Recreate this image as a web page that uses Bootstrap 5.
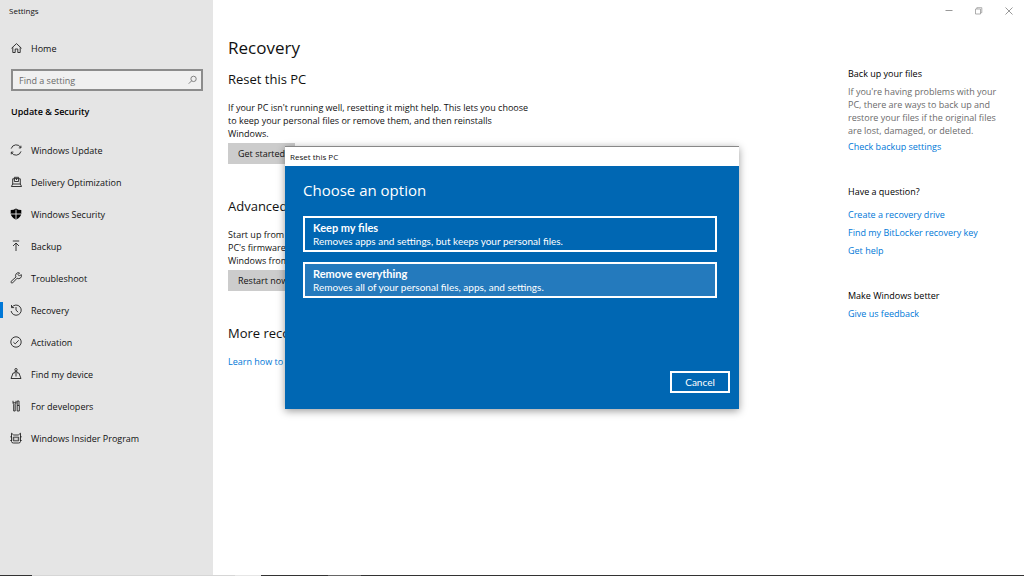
<!DOCTYPE html>
<html lang="en">
<head>
<meta charset="utf-8">
<meta name="viewport" content="width=device-width, initial-scale=1">
<title>Settings</title>
<link href="https://cdn.jsdelivr.net/npm/bootstrap@5.3.0/dist/css/bootstrap.min.css" rel="stylesheet">
<style>
  body { font: 9px/13px "Open Sans", "Noto Sans", sans-serif; color: #111; background: #fff; }
  a { color: #0078d7; text-decoration: none; }
  a:hover { text-decoration: underline; }
  svg { fill: none; stroke: #222; }

  .sidebar { width: 213px; background: #e5e5e5; }
  .app-title { font-size: 8px; line-height: 22px; padding-left: 9px; }
  .side-link { height: 32px; gap: 9px; padding-left: 10px; color: #111; }
  .side-link svg { width: 12px; height: 12px; flex: none; stroke-width: .9; }
  .active-bar { width: 3px; height: 16px; background: #0078d7; left: 0; top: 8px; }
  .home-link { margin-top: 10px; }
  .search-box { margin: 5px 10px 0 11px; height: 22px; border: 2px solid #8c8c8c; background: #f0f0f0; }
  .search-box input { font-size: 9px; line-height: 13px; padding: 0 6px; color: #111; }
  .search-box input::placeholder { color: #6a6a6a; }
  .search-box svg { width: 10px; height: 10px; stroke: #777; margin-right: 4px; }
  .group-title { font-size: 9px; line-height: 13px; font-weight: 600; color: #000; margin: 14px 0 16px 11px; }

  .window-controls button { width: 30px; height: 22px; }
  .window-controls svg { width: 8px; height: 8px; stroke: #999; }
  .content-col { padding: 14px 15px 0; }
  .content-col .copy { max-width: 302px; margin: 0; }
  h1 { font-size: 17px; line-height: 24px; font-weight: 400; margin: 0 0 11px; }
  h2 { font-size: 13px; line-height: 16px; font-weight: 400; margin: 0 0 14px; }
  .section-block { padding-bottom: 34px; }
  .btn-flat { font-size: 9px; line-height: 13px; padding: 4px 10px; background: #ccc; border-radius: 0; border: 0; color: #111; margin-top: 3px; }
  .help-col { width: 176px; padding: 45px 24px 0 0; }
  .help-col h3 { font-size: 9px; line-height: 13px; font-weight: 400; color: #000; margin: 0; }
  .help-col .muted-copy { color: #6b6b6b; margin: 5px 0 3px; }
  .help-col section { margin-bottom: 32px; }
  .help-links { margin-top: 10px; gap: 5px; }
  .feedback-link { margin-top: 5px; }

  .dialog-layer { inset: 0; padding-bottom: 21px; }
  .dialog-box { width: 454px; background: #0067b3; color: #fff; border-top: 1px solid #888; box-shadow: 0 2px 8px rgba(0,0,0,.4); }
  .dialog-caption { background: #fff; color: #111; font-size: 8px; line-height: 19px; padding: 0 5px; }
  .dialog-content { padding: 14px 9px 16px 18px; min-height: 243px; }
  .dialog-content h2 { font-size: 15px; line-height: 20px; margin: 0 0 16px; }
  .option-list { margin-right: 13px; gap: 10px; }
  .option-btn { border: 2px solid #fff; background: #0067b3; color: #fff; text-align: left; padding: 3px 8px 2px; font: 10px/14px Lato, "Open Sans", sans-serif; }
  .option-btn strong { font-size: 11px; line-height: 13px; }
  .option-btn.hovered, .option-btn:hover { background: #247abd; }
  .cancel-btn { width: 60px; height: 22px; border: 2px solid #fff; background: #0067b3; color: #fff; font: 10px/14px Lato, "Open Sans", sans-serif; }

  .taskbar-edge { height: 1px; background: #333; }
  .taskbar-edge div:nth-child(1) { width: 32px; }
  .taskbar-edge div:nth-child(2) { width: 203px; background: #d6d6d6; }
  .taskbar-edge div:nth-child(3) { width: 26px; background: #e6e6e6; }
  .taskbar-edge div:nth-child(4) { width: 67px; }
  .taskbar-edge div:nth-child(5) { width: 33px; background: #666; }
</style>
</head>
<body class="min-vh-100 d-flex flex-column position-relative">

<div class="d-flex flex-grow-1">
  <nav class="sidebar flex-shrink-0" aria-label="Settings">
    <div class="app-title">Settings</div>
    <a href="#" class="side-link home-link d-flex align-items-center">
      <svg viewBox="0 0 12 12"><path d="M1.500 6.300 6.500 1.600l5 4.700M2.800 5.300v5.200h2.400V7h2.600v3.500h2.400V5.300"/></svg>Home
    </a>
    <div class="search-box d-flex align-items-center">
      <input type="text" class="flex-grow-1 border-0 bg-transparent w-100" placeholder="Find a setting" aria-label="Find a setting">
      <svg viewBox="0 0 10 10"><circle cx="6" cy="3.800" r="2.900"/><path d="M3.900 5.900.8 9"/></svg>
    </div>
    <h2 class="group-title">Update &amp; Security</h2>
    <a href="#" class="side-link d-flex align-items-center">
      <svg viewBox="0 0 12 12"><path d="M1.200 4.600A5.200 5.200 0 0 1 10.800 3.600M11 7.400A5.200 5.200 0 0 1 1.400 8.400M10.900 1.700V3.900H8.800M1.300 10.300V8.100H3.400"/></svg>Windows Update
    </a>
    <a href="#" class="side-link d-flex align-items-center">
      <svg viewBox="0 0 12 12"><path d="M2.700 8V2.800H4.400M8.600 2.800H10.300V8M2.700 8H10.300L11.600 10.500H1.400zM4.400 1.300H8.600V5.500H4.400zM4.400 2.600H8.600M6.500 2.600V4"/></svg>Delivery Optimization
    </a>
    <a href="#" class="side-link d-flex align-items-center">
      <svg viewBox="0 0 12 12"><path d="M6 .5Q8.300 2 11.300 2V5.500Q10.800 9.600 6 11.500Q1.200 9.600 .7 5.500V2Q3.700 2 6 .5z" fill="#000" stroke="none"/><path d="M6 1.500V11M1 6H11" stroke="#e5e5e5"/></svg>Windows Security
    </a>
    <a href="#" class="side-link d-flex align-items-center">
      <svg viewBox="0 0 12 12"><path d="M2.800 1H9.200M6 11V3M3 6 6 3 9 6"/></svg>Backup
    </a>
    <a href="#" class="side-link d-flex align-items-center">
      <svg viewBox="0 0 12 12"><path d="M6 5A2.800 2.800 0 0 1 9.600 1L8 2.600 9.500 4.100 11.100 2.500A2.800 2.800 0 0 1 7.100 6.200L2.600 10.900A1.100 1.100 0 0 1 1.100 9.400z"/></svg>Troubleshoot
    </a>
    <a href="#" class="side-link d-flex align-items-center position-relative" aria-current="page">
      <span class="active-bar position-absolute"></span>
      <svg viewBox="0 0 12 12"><path d="M1.900 3.300A5.100 5.100 0 1 1 1.100 7M1.500 1V3.600H4.100M6 3V6.200L8.200 8.200"/></svg>Recovery
    </a>
    <a href="#" class="side-link d-flex align-items-center">
      <svg viewBox="0 0 12 12"><circle cx="6" cy="6" r="5.200"/><path d="M3.400 6.200 5.200 7.900 8.700 4.300"/></svg>Activation
    </a>
    <a href="#" class="side-link d-flex align-items-center">
      <svg viewBox="0 0 12 12"><circle cx="6" cy="1.700" r="1.200"/><path d="M6 2.900V8.500M4.600 5H3.100L1 10.500H11L8.900 5H7.400M4 4.500 6 3.500 8 4.500"/></svg>Find my device
    </a>
    <a href="#" class="side-link d-flex align-items-center">
      <svg viewBox="0 0 12 12"><path d="M3 .8V3.200L3.700 4.200V11H5.200V4.200L6 3.200V.8M3 2.800H6M7.200 1H9V5.500M7.200 1V5.500M7.200 5.500H9.300V11H7.200z"/></svg>For developers
    </a>
    <a href="#" class="side-link d-flex align-items-center">
      <svg viewBox="0 0 12 12"><path d="M1.500 1.200V9.500Q1.500 11 3.500 11H8.500Q10.500 11 10.500 9.500V1.200L8.300 3H3.700zM.3 4.800H2M10 4.800H11.700M.3 8.500H2M10 8.500H11.700M3.300 5.200H8.700V8.800H3.300zM4.500 7H5.200M6.800 7H7.500"/></svg>Windows Insider Program
    </a>
  </nav>

  <div class="flex-grow-1 d-flex flex-column">
    <div class="window-controls d-flex justify-content-end">
      <button type="button" class="btn p-0 border-0 d-flex align-items-center justify-content-center" aria-label="Minimize"><svg viewBox="0 0 8 8"><path d="M.5 3.500H7.500"/></svg></button>
      <button type="button" class="btn p-0 border-0 d-flex align-items-center justify-content-center" aria-label="Restore"><svg viewBox="0 0 8 8"><path d="M.5 2H5.500V7H.5zM1.800 2V.7H6.800V5.700H5.500" stroke-width=".8"/></svg></button>
      <button type="button" class="btn p-0 border-0 d-flex align-items-center justify-content-center" aria-label="Close"><svg viewBox="0 0 8 8"><path d="M.5.5 7.500 7.500M7.500.5.5 7.500"/></svg></button>
    </div>
    <div class="d-flex flex-grow-1 justify-content-between">
      <main class="content-col">
        <h1>Recovery</h1>
        <section class="section-block">
          <h2>Reset this PC</h2>
          <p class="copy">If your PC isn't running well, resetting it might help. This lets you choose to keep your personal files or remove them, and then reinstalls Windows.</p>
          <button type="button" class="btn btn-flat">Get started</button>
        </section>
        <section class="section-block">
          <h2>Advanced startup</h2>
          <p class="copy">Start up from<br>PC's firmware<br>Windows from</p>
          <button type="button" class="btn btn-flat">Restart now</button>
        </section>
        <section>
          <h2>More recovery options</h2>
          <a href="#">Learn how to start fresh</a>
        </section>
      </main>
      <aside class="help-col flex-shrink-0">
        <section>
          <h3>Back up your files</h3>
          <p class="muted-copy">If you're having problems with your PC, there are ways to back up and restore your files if the original files are lost, damaged, or deleted.</p>
          <a href="#">Check backup settings</a>
        </section>
        <section>
          <h3>Have a question?</h3>
          <div class="help-links d-flex flex-column align-items-start">
            <a href="#">Create a recovery drive</a>
            <a href="#">Find my BitLocker recovery key</a>
            <a href="#">Get help</a>
          </div>
        </section>
        <section>
          <h3>Make Windows better</h3>
          <a href="#" class="d-inline-block feedback-link">Give us feedback</a>
        </section>
      </aside>
    </div>
  </div>
</div>

<div class="taskbar-edge d-flex"><div></div><div></div><div></div><div></div><div></div></div>

<div class="dialog-layer position-absolute d-flex align-items-center justify-content-center">
  <div class="dialog-box" role="dialog" aria-labelledby="dialog-caption">
    <div class="dialog-caption" id="dialog-caption">Reset this PC</div>
    <div class="dialog-content d-flex flex-column">
      <h2>Choose an option</h2>
      <div class="option-list d-flex flex-column">
        <button type="button" class="option-btn"><strong class="d-block">Keep my files</strong>Removes apps and settings, but keeps your personal files.</button>
        <button type="button" class="option-btn hovered"><strong class="d-block">Remove everything</strong>Removes all of your personal files, apps, and settings.</button>
      </div>
      <button type="button" class="cancel-btn mt-auto ms-auto p-0">Cancel</button>
    </div>
  </div>
</div>

<script src="https://cdn.jsdelivr.net/npm/bootstrap@5.3.0/dist/js/bootstrap.bundle.min.js"></script>
</body>
</html>
